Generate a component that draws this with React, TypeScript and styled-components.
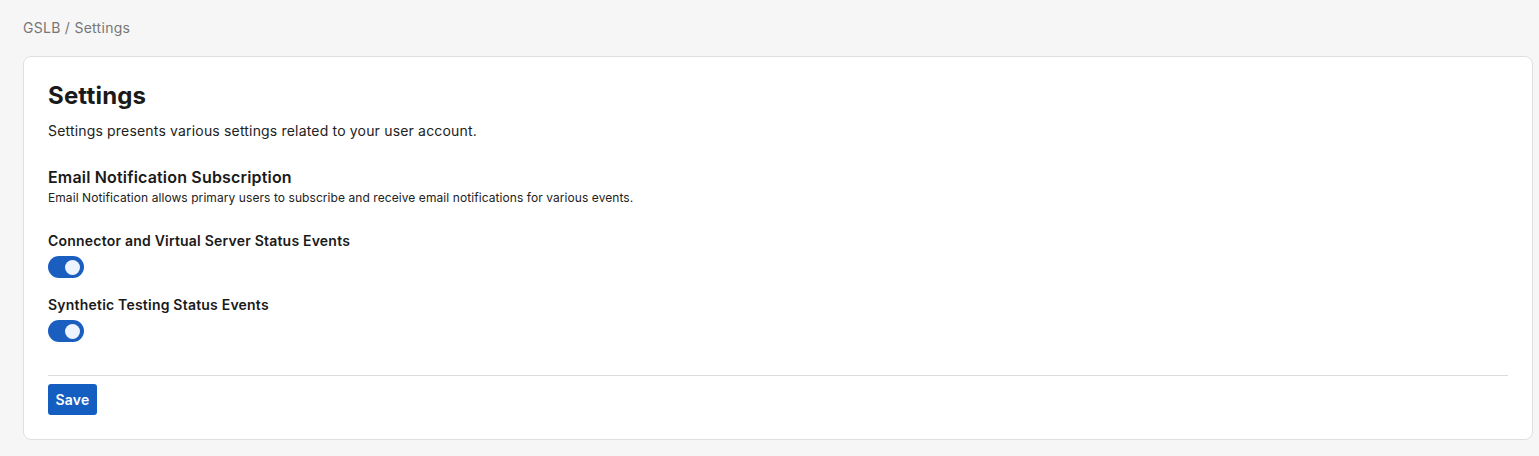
import React, { useState } from "react";
import styled, { createGlobalStyle } from "styled-components";

const Global = createGlobalStyle`
  html, body { margin: 0; padding: 0; background: #f6f6f6; }
  body { font-family: Inter, "Noto Sans", "Liberation Sans", sans-serif; color: #1c1c1c; letter-spacing: 0.011em; }
  * { box-sizing: border-box; }
`;

const Page = styled.div`
  padding: 18px 6px 16px 23px;
`;

const Breadcrumb = styled.div`
  font-size: 14px;
  line-height: 20px;
  color: #767676;
  margin-bottom: 18px;
  letter-spacing: 0.02em;
`;

const Card = styled.section`
  background: #fff;
  border: 1px solid #e0e0e0;
  border-radius: 8px;
  padding: 23px 24px 24px 24px;
`;

const Title = styled.h1`
  margin: 0;
  font-size: 24px;
  line-height: 32px;
  font-weight: 700;
  color: #1a1a1a;
`;

const Description = styled.p`
  margin: 9px 0 0;
  font-size: 14px;
  line-height: 20px;
  color: #222;
`;

const SectionTitle = styled.h2`
  margin: 24px 0 0;
  font-size: 16px;
  line-height: 24px;
  font-weight: 600;
  color: #1a1a1a;
`;

const SectionText = styled.p`
  margin: 1px 0 0;
  font-size: 12px;
  line-height: 16px;
  color: #222;
  letter-spacing: 0.006em;
`;

const Options = styled.div`
  display: flex;
  flex-direction: column;
  gap: 17px;
  margin-top: 25px;
`;

const Option = styled.div`
  display: flex;
  flex-direction: column;
  align-items: flex-start;
  gap: 5px;
`;

const Label = styled.label`
  font-size: 14px;
  line-height: 20px;
  font-weight: 600;
  color: #1a1a1a;
  letter-spacing: 0.015em;
`;

const Switch = styled.button<{ $on: boolean }>`
  width: 36px;
  height: 22px;
  border-radius: 11px;
  border: none;
  padding: 0;
  cursor: pointer;
  background: ${(p) => (p.$on ? "#1a5ec0" : "#b9b9b9")};
  display: flex;
  align-items: center;
  justify-content: ${(p) => (p.$on ? "flex-end" : "flex-start")};
  padding: 0 4px;
`;

const Knob = styled.span`
  width: 15px;
  height: 15px;
  border-radius: 50%;
  background: #eef4ff;
`;

const Divider = styled.hr`
  margin: 33px 0 8px;
  border: none;
  border-top: 1px solid #dcdcdc;
`;

const SaveButton = styled.button`
  height: 31px;
  width: 49px;
  padding: 0;
  border: none;
  border-radius: 3px;
  background: #155ec1;
  color: #fff;
  font-family: inherit;
  font-size: 14px;
  font-weight: 600;
  letter-spacing: 0.011em;
  cursor: pointer;
`;

export default function App() {
  const [a, setA] = useState(true);
  const [b, setB] = useState(true);
  return (
    <>
      <Global />
      <Page>
        <Breadcrumb>GSLB / Settings</Breadcrumb>
        <Card>
          <Title>Settings</Title>
          <Description>Settings presents various settings related to your user account.</Description>
          <SectionTitle>Email Notification Subscription</SectionTitle>
          <SectionText>
            Email Notification allows primary users to subscribe and receive email notifications for various events.
          </SectionText>
          <Options>
            <Option>
              <Label>Connector and Virtual Server Status Events</Label>
              <Switch $on={a} onClick={() => setA(!a)} aria-pressed={a}>
                <Knob />
              </Switch>
            </Option>
            <Option>
              <Label>Synthetic Testing Status Events</Label>
              <Switch $on={b} onClick={() => setB(!b)} aria-pressed={b}>
                <Knob />
              </Switch>
            </Option>
          </Options>
          <Divider />
          <SaveButton>Save</SaveButton>
        </Card>
      </Page>
    </>
  );
}
